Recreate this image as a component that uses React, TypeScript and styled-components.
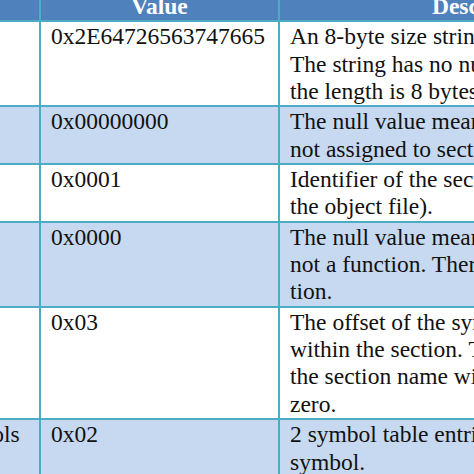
import React from "react";
import styled, { createGlobalStyle } from "styled-components";

const GlobalStyle = createGlobalStyle`
  html, body {
    margin: 0;
    padding: 0;
    background: #ffffff;
    overflow: hidden;
  }
`;

const rows = [
  {
    field: "Name",
    value: "0x2E64726563747665",
    desc: [
      "An 8-byte size string (.drectve).",
      "The string has no null terminator as",
      "the length is 8 bytes.",
    ],
  },
  {
    field: "Value",
    value: "0x00000000",
    desc: ["The null value means the symbol is", "not assigned to section yet."],
  },
  {
    field: "Section",
    value: "0x0001",
    desc: ["Identifier of the section (index in", "the object file)."],
  },
  {
    field: "Type",
    value: "0x0000",
    desc: [
      "The null value means the symbol is",
      "not a function. There are no func-",
      "tion.",
    ],
  },
  {
    field: "Class",
    value: "0x03",
    desc: [
      "The offset of the symbol (the value)",
      "within the section. The value for",
      "the section name will be always",
      "zero.",
    ],
  },
  {
    field: "Aux symbols",
    value: "0x02",
    desc: ["2 symbol table entries follow this", "symbol."],
  },
];

const App = () => {
  return (
    <Page>
      <GlobalStyle />
      <Table>
        <colgroup>
          <col style={{ width: 156 }} />
          <col style={{ width: 239 }} />
          <col style={{ width: 422 }} />
        </colgroup>
        <thead>
          <tr>
            <HeadCell>Field</HeadCell>
            <HeadCell>Value</HeadCell>
            <HeadCell>Description</HeadCell>
          </tr>
        </thead>
        <tbody>
          {rows.map((r, i) => (
            <Row key={r.field} $shaded={i % 2 === 1}>
              <Cell>{r.field}</Cell>
              <Cell>{r.value}</Cell>
              <Cell>
                {r.desc.map((line) => (
                  <Line key={line}>{line}</Line>
                ))}
              </Cell>
            </Row>
          ))}
        </tbody>
      </Table>
    </Page>
  );
};
export default App;

const Page = styled.div`
  width: 474px;
  height: 474px;
  overflow: hidden;
  background: #ffffff;
`;

const Table = styled.table`
  border-collapse: collapse;
  table-layout: fixed;
  width: 817px;
  margin-top: -8px;
  margin-left: -117px;
  font-family: "Liberation Serif", "Times New Roman", serif;
  font-size: 23.5px;
  line-height: 27.35px;
  color: #111111;
`;

const HeadCell = styled.th`
  background: #4f81bd;
  color: #ffffff;
  font-weight: 700;
  text-align: center;
  padding: 1px 10px 0;
  border: 2px solid #4bacc6;
  border-top: none;
`;

const Row = styled.tr<{ $shaded: boolean }>`
  background: ${(p) => (p.$shaded ? "#c6d9f1" : "#ffffff")};
`;

const Cell = styled.td`
  vertical-align: top;
  text-align: left;
  padding: 1px 10px 0;
  border: 2px solid #4bacc6;
  overflow: hidden;
`;

const Line = styled.span`
  display: block;
  white-space: nowrap;
`;
